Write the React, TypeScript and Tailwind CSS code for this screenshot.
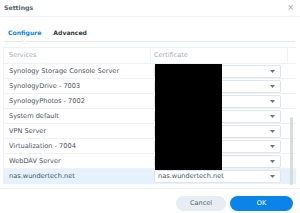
import React from "react";

const rows = [
  "Synology Storage Console Server",
  "SynologyDrive - 7003",
  "SynologyPhotos - 7002",
  "System default",
  "VPN Server",
  "Virtualization - 7004",
  "WebDAV Server",
  "nas.wundertech.net",
];

function Arrow() {
  return (
    <svg width="5" height="3" viewBox="0 0 5 3" className="shrink-0">
      <path d="M0 0H5L2.5 3Z" fill="#6b7580" />
    </svg>
  );
}

export default function App() {
  return (
    <div
      className="relative w-[300px] h-[213px] bg-white overflow-hidden text-[#4a545e]"
      style={{ fontFamily: '"DejaVu Sans", Verdana, sans-serif' }}
    >
      {/* Title bar */}
      <div className="h-[17px] flex items-center justify-between pl-[4px] pr-[6px] border-b border-[#eef1f5]">
        <span className="text-[6.2px] font-bold text-[#555e68] leading-none">Settings</span>
        <span className="text-[8px] text-[#9aa3ad] leading-none">×</span>
      </div>
      {/* Tabs */}
      <div className="relative mx-[4px] mr-[5px] h-[25px] flex items-center gap-[12px] pl-[4px] pt-[8px] border-b border-[#e3e8ee]">
        <span className="text-[6.1px] font-bold text-[#0a84e8] leading-none">Configure</span>
        <span className="text-[6.1px] font-bold text-[#2f3740] leading-none">Advanced</span>
        <div className="absolute left-[18px] bottom-[-1px] w-[5px] h-[3px]">
          <svg width="5" height="3" viewBox="0 0 5 3">
            <path d="M0 3L2.5 0.5L5 3" fill="white" stroke="#e3e8ee" strokeWidth="0.8" />
          </svg>
        </div>
      </div>
      {/* Table */}
      <div className="mt-[5px] ml-[3px] mr-[4px] border-l border-t border-[#eef1f5]">
        <div className="h-[16px] flex items-center border-b border-[#eef1f5] text-[6.5px] text-[#a7aeb6]">
          <div className="w-[147px] pl-[5px] h-full flex items-center border-r border-[#eef1f5]">Services</div>
          <div className="w-[137px] pl-[3px] h-full flex items-center border-r border-[#eef1f5]">Certificate</div>
          <div className="flex-1" />
        </div>
        {rows.map((r, i) => {
          const sel = i === rows.length - 1;
          return (
            <div
              key={r}
              className={`h-[15px] flex items-center border-b ${sel ? "bg-[#e5f1fc] border-[#e5f1fc]" : "border-[#f0f2f5]"}`}
            >
              <div className="w-[147px] pl-[5px] text-[6.6px] leading-none whitespace-nowrap">{r}</div>
              <div className="w-[127px] h-[13px] ml-[3px] bg-white border border-[#dfe4ea] rounded-[2px] flex items-center justify-between pl-[3px] pr-[5px]">
                <span className="text-[6.6px] leading-none text-[#4a545e]">{sel ? "nas.wundertech.net" : ""}</span>
                <Arrow />
              </div>
            </div>
          );
        })}
      </div>
      {/* Footer */}
      <div className="mt-[4px] border-t border-[#eef1f5] flex justify-end items-center gap-[4px] pr-[7px] pt-[7px]">
        <div className="w-[50px] h-[15px] rounded-full bg-[#e8edf3] flex items-center justify-center text-[6.5px] text-[#5a636d]">
          Cancel
        </div>
        <div className="w-[63px] h-[15px] rounded-full bg-[#0a84e8] flex items-center justify-center text-[6.5px] text-white">
          OK
        </div>
      </div>
      {/* Redaction overlay */}
      <div className="absolute left-[155px] top-[64px] w-[67px] h-[106px] bg-black" />
      {/* Scrollbar */}
      <div className="absolute left-[290px] top-[117px] w-[3px] h-[68px] rounded-full bg-[#d9dcdf]" />
    </div>
  );
}
